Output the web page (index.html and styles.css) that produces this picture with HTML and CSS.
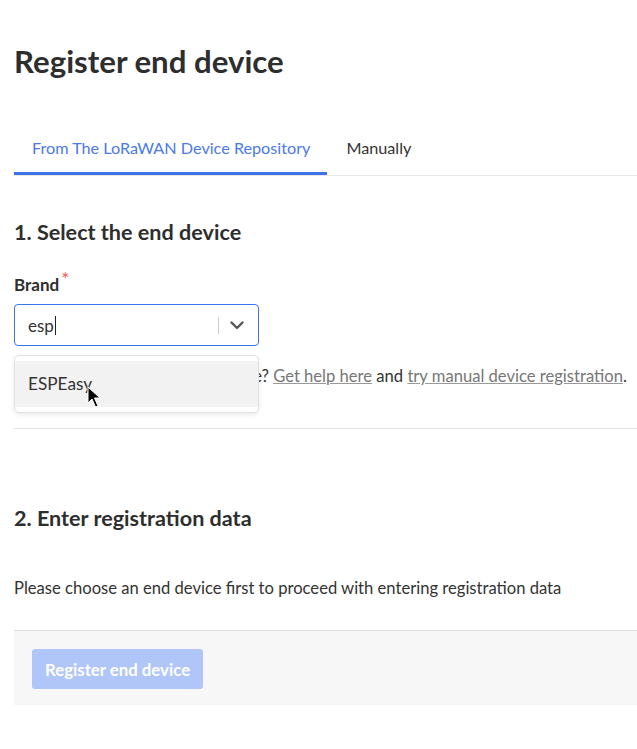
FILE: index.html
```html
<!DOCTYPE html>
<html>
<head>
<meta charset="utf-8">
<link rel="stylesheet" href="styles.css">
</head>
<body>
<div class="page">
  <h1 class="title">Register end device</h1>
  <div class="tabs">
    <div class="tab active">From The LoRaWAN Device Repository</div>
    <div class="tab">Manually</div>
  </div>
  <section class="step">
    <h2 class="step-title">1. Select the end device</h2>
    <div class="field">
      <label class="label">Brand<span class="req">*</span></label>
      <div class="select-wrap">
        <div class="select">
          <span class="value">esp<span class="caret"></span></span>
          <span class="sep"></span>
          <svg class="chev" width="14" height="9" viewBox="0 0 14 9"><path d="M1.5 1.5 L7 7 L12.5 1.5" fill="none" stroke="#555" stroke-width="2.4" stroke-linecap="round" stroke-linejoin="round"/></svg>
        </div>
        <div class="menu">
          <div class="option">ESPEasy</div>
        </div>
        <svg class="cursor" width="16" height="24" viewBox="0 0 16 24"><path d="M1 1 L1 17 L5 13 L8.5 21 L11 20 L7.5 12 L13 12 Z" fill="#000" stroke="#fff" stroke-width="1"/></svg>
      </div>
      <p class="help">Cannot find your exact end device? <a href="#">Get help here</a> and <a href="#">try manual device registration</a>.</p>
    </div>
  </section>
  <section class="step step2">
    <h2 class="step-title">2. Enter registration data</h2>
    <p class="note">Please choose an end device first to proceed with entering registration data</p>
  </section>
  <div class="footer">
    <button class="btn" disabled>Register end device</button>
  </div>
</div>
</body>
</html>
```

FILE: styles.css
```css
html, body {
  margin: 0;
  padding: 0;
  background: #fff;
  overflow: hidden;
}
body {
  font-family: "Lato", "Liberation Sans", sans-serif;
  color: #222;
}
.page {
  margin-left: 14px;
  width: 700px;
  padding-top: 42px;
}
.title {
  margin: 0;
  font-size: 31.2px;
  font-weight: 700;
  line-height: 38px;
  color: #2e2e2e;
}
.tabs {
  display: flex;
  margin-top: 50px;
  border-bottom: 1px solid #e8e8e8;
}
.tab {
  padding: 7px 17px 0 18px;
  height: 45px;
  line-height: 22px;
  font-size: 16.2px;
  color: #333;
  box-sizing: border-box;
}
.tab.active {
  color: #4b79ee;
  border-bottom: 3px solid #3e72ec;
  margin-bottom: -1px;
}
.tab:last-child { padding-left: 19px; }
.step {
  border-bottom: 1px solid #e3e3e3;
}
.step-title {
  margin: 0;
  font-size: 21.6px;
  font-weight: 700;
  color: #2e2e2e;
  line-height: 26px;
  padding-top: 43px;
}
.field {
  padding-top: 30px;
  padding-bottom: 42px;
}
.label {
  display: block;
  font-size: 17px;
  font-weight: 700;
  color: #2e2e2e;
  line-height: 20px;
  height: 20px;
}
.req {
  color: #f2555a;
  font-weight: 400;
  font-size: 19px;
  line-height: 0;
  margin-left: 2px;
  position: relative;
  top: -5px;
}
.select-wrap {
  position: relative;
  margin-top: 9px;
  width: 245px;
}
.select {
  display: flex;
  align-items: center;
  height: 42px;
  box-sizing: border-box;
  border: 1px solid #3e72ec;
  border-radius: 4px;
  padding: 0 14px 0 13px;
}
.value {
  flex: 1;
  font-size: 17px;
  color: #333;
  display: flex;
  align-items: center;
}
.caret {
  display: inline-block;
  width: 1px;
  height: 19px;
  background: #222;
  margin-left: 1px;
}
.sep {
  width: 1px;
  height: 17px;
  background: #ccc;
  margin-right: 11px;
}
.chev { display: block; }
.menu {
  position: absolute;
  left: 0;
  top: 51px;
  width: 245px;
  box-sizing: border-box;
  background: #fff;
  border: 1px solid #e2e2e2;
  border-radius: 5px;
  box-shadow: 0 2px 5px rgba(0,0,0,0.08);
  padding: 5px 0;
  z-index: 2;
}
.option {
  background: #f2f2f2;
  height: 46px;
  line-height: 46px;
  padding-left: 13px;
  font-size: 17.2px;
  color: #333;
}
.cursor {
  position: absolute;
  left: 73px;
  top: 82px;
  z-index: 3;
}
.help {
  margin: 20px 0 0;
  font-size: 16.6px;
  line-height: 20px;
  color: #333;
}
.help a {
  color: #777;
  text-decoration: underline;
  text-decoration-color: #999;
}
.step2 {
  border-bottom: none;
}
.step2 .step-title {
  padding-top: 76px;
}
.note {
  margin: 47px 0 0;
  font-size: 16.6px;
  line-height: 20px;
  color: #333;
  padding-bottom: 32px;
}
.footer {
  background: #f7f7f7;
  border-top: 1px solid #e0e0e0;
  padding: 18px 18px 16px;
}
.btn {
  font-family: inherit;
  font-size: 16.8px;
  font-weight: 700;
  color: #fff;
  background: #b0c6f8;
  border: none;
  border-radius: 3px;
  height: 40px;
  padding: 0 13px;
}
```
